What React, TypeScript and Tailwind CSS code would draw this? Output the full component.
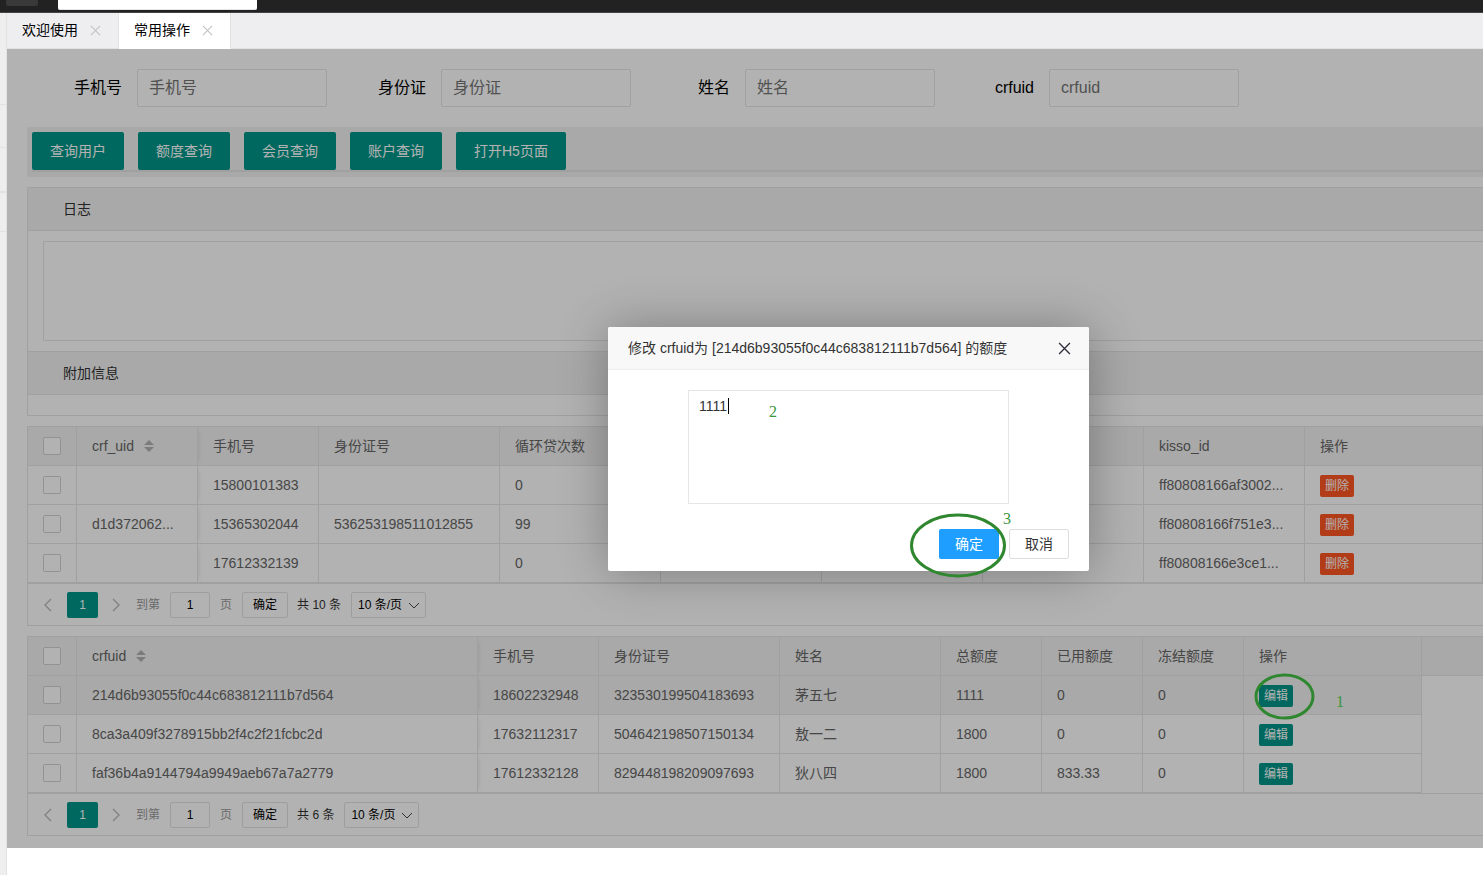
import { useState } from 'react';

const FIELDS = [
  { id: 'mobile', label: '手机号' },
  { id: 'idNo', label: '身份证' },
  { id: 'name', label: '姓名' },
  { id: 'crfuid', label: 'crfuid' },
];

const ACTIONS = ['查询用户', '额度查询', '会员查询', '账户查询', '打开H5页面'];

const USER_COLS = ['w-[121px]', 'w-[121px]', 'w-[181px]', 'w-[161px]', 'w-[161px]', 'w-[161px]', 'w-[161px]', 'w-[161px]', ''];
const USER_HEADS = ['crf_uid', '手机号', '身份证号', '循环贷次数', '', '', '', 'kisso_id'];
const USERS = [
  ['', '15800101383', '', '0', '', '', '', 'ff80808166af3002...'],
  ['d1d372062...', '15365302044', '536253198511012855', '99', '', '', '', 'ff80808166f751e3...'],
  ['', '17612332139', '', '0', '', '', '', 'ff80808166e3ce1...'],
];

const QUOTA_COLS = ['w-[401px]', 'w-[121px]', 'w-[181px]', 'w-[161px]', 'w-[101px]', 'w-[101px]', 'w-[101px]', 'w-[178px]', ''];
const QUOTA_HEADS = ['crfuid', '手机号', '身份证号', '姓名', '总额度', '已用额度', '冻结额度'];
const QUOTAS = [
  ['214d6b93055f0c44c683812111b7d564', '18602232948', '323530199504183693', '茅五七', '1111', '0', '0'],
  ['8ca3a409f3278915bb2f4c2f21fcbc2d', '17632112317', '504642198507150134', '敖一二', '1800', '0', '0'],
  ['faf36b4a9144794a9949aeb67a7a2779', '17612332128', '829448198209097693', '狄八四', '1800', '833.33', '0'],
];

const CELL = 'h-[39px] border-r border-b border-[#e6e6e6] px-[15px] text-left align-middle font-normal whitespace-nowrap';
const PINNED = 'shadow-[5px_0_4px_-4px_rgba(0,0,0,0.08)]';

function Cross({ className }: { className: string }) {
  return (
    <svg className={className} viewBox="0 0 12 12" fill="none" stroke="currentColor" strokeWidth="1.2" aria-hidden="true">
      <path d="M1 1l10 10M11 1L1 11" />
    </svg>
  );
}

function SortIcon() {
  return (
    <svg className="w-[10px] h-3 fill-[#b2b2b2]" viewBox="0 0 10 12" aria-hidden="true">
      <path d="M5 0l5 5H0zM5 12L0 7h10z" />
    </svg>
  );
}

function Check({ label }: { label: string }) {
  return (
    <input
      type="checkbox"
      aria-label={label}
      className="block w-[18px] h-[18px] appearance-none rounded-xs border border-[#d2d2d2] bg-white checked:bg-[#5fb878]"
    />
  );
}

function Tab({ title, active }: { title: string; active?: boolean }) {
  return (
    <div
      className={`flex items-center gap-3 border-r border-b border-r-[#e2e2e2] pr-[17px] pb-px pl-[15px] ${
        active ? 'border-b-white bg-white' : 'border-b-[#e2e2e2]'
      }`}
    >
      <a href="#" className="text-sm text-black">{title}</a>
      <button type="button" aria-label="关闭" className="text-[#c2c2c2]">
        <Cross className="w-[11px] h-[11px]" />
      </button>
    </div>
  );
}

function Pager({ id, total }: { id: string; total: number }) {
  return (
    <div className="flex h-[42px] items-center border-t border-[#e6e6e6] pl-[15px] text-xs text-[#333]">
      <button type="button" aria-label="上一页" className="text-[#bbb]">
        <svg className="w-[10px] h-[14px]" viewBox="0 0 10 14" fill="none" stroke="currentColor" strokeWidth="1.4">
          <path d="M8 1L2 7l6 6" />
        </svg>
      </button>
      <button type="button" className="ml-[14px] w-[31px] h-[26px] rounded-xs bg-[#009688] text-white">1</button>
      <button type="button" aria-label="下一页" className="ml-[13px] text-[#bbb]">
        <svg className="w-[10px] h-[14px]" viewBox="0 0 10 14" fill="none" stroke="currentColor" strokeWidth="1.4">
          <path d="M2 1l6 6-6 6" />
        </svg>
      </button>
      <label htmlFor={`${id}-page`} className="ml-[15px] text-[#999]">到第</label>
      <input
        id={`${id}-page`}
        defaultValue="1"
        className="mx-[10px] w-10 h-[26px] rounded-xs border border-[#e2e2e2] text-center text-black outline-none"
      />
      <span className="text-[#999]">页</span>
      <button type="button" className="ml-[10px] w-[46px] h-[26px] rounded-xs border border-[#e2e2e2] text-black">确定</button>
      <span className="ml-[9px]">共 {total} 条</span>
      <div className="relative ml-[10px]">
        <select
          aria-label="每页条数"
          className="block w-[75px] h-[26px] appearance-none rounded-xs border border-[#e2e2e2] pl-[6px] text-black outline-none"
        >
          <option>10 条/页</option>
          <option>20 条/页</option>
        </select>
        <svg className="pointer-events-none absolute top-[10px] right-[6px] w-3 h-2" viewBox="0 0 12 8" fill="none" stroke="#444">
          <path d="M1 1l5 5 5-5" />
        </svg>
      </div>
    </div>
  );
}

type GridProps = {
  id: string;
  cols: string[];
  heads: string[];
  rows: string[][];
  action: string;
  actionClass: string;
  total: number;
  filler?: boolean;
  selected?: number;
};

function Grid({ id, cols, heads, rows, action, actionClass, total, filler, selected }: GridProps) {
  return (
    <div className="mt-[10px] overflow-hidden border-y border-l border-[#e6e6e6]">
      <table className="w-full table-fixed border-separate border-spacing-0 text-sm text-[#666]">
        <colgroup>
          <col className="w-[49px]" />
          {cols.map((c, i) => (
            <col key={i} className={c} />
          ))}
        </colgroup>
        <thead>
          <tr className="bg-[#f2f2f2]">
            <th className={CELL}><Check label="全选" /></th>
            {heads.map((h, i) => (
              <th key={i} className={`${CELL} ${i === 0 ? PINNED : ''}`}>
                {i === 0 ? (
                  <button type="button" className="flex items-center gap-[10px]">
                    {h} <SortIcon />
                  </button>
                ) : h}
              </th>
            ))}
            <th className={CELL}>操作</th>
            {filler && <th className="border-b border-[#e6e6e6]" />}
          </tr>
        </thead>
        <tbody>
          {rows.map((row, r) => (
            <tr key={r} className={r === selected ? 'bg-[#f2f2f2]' : ''}>
              <td className={CELL}><Check label="选择" /></td>
              {row.map((v, i) => (
                <td key={i} className={`${CELL} ${i === 0 ? PINNED : ''}`}>{v}</td>
              ))}
              <td className={CELL}>
                <button type="button" className={`mt-[2px] block h-[22px] rounded-xs px-[5px] text-xs text-white ${actionClass}`}>
                  {action}
                </button>
              </td>
              {filler && <td className="bg-white" />}
            </tr>
          ))}
        </tbody>
      </table>
      <Pager id={id} total={total} />
    </div>
  );
}

function QuotaDialog() {
  const [amount, setAmount] = useState('1111');

  return (
    <div
      role="dialog"
      aria-labelledby="dialog-title"
      className="absolute top-[278px] left-[601px] w-[481px] rounded-xs bg-white shadow-[1px_1px_50px_rgba(0,0,0,0.3)]"
    >
      <div className="flex h-[43px] items-center justify-between rounded-t-xs border-b border-[#eee] bg-[#f8f8f8] pr-[18px] pl-5">
        <h2 id="dialog-title" className="text-sm text-[#333]">修改 crfuid为 [214d6b93055f0c44c683812111b7d564] 的额度</h2>
        <button type="button" aria-label="关闭" className="text-[#2d2c3b]">
          <Cross className="w-[13px] h-[13px]" />
        </button>
      </div>
      <div className="relative mx-20 mt-5">
        <textarea
          aria-labelledby="dialog-title"
          value={amount}
          onChange={(e) => setAmount(e.target.value)}
          className="block w-full h-[114px] resize-none border border-[#e6e6e6] px-[10px] py-[5px] text-sm text-[#333] outline-none"
        />
        <span className="absolute top-2 left-10 w-px h-4 bg-black" />
      </div>
      <div className="flex justify-end gap-[10px] px-5 pt-[25px] pb-3 text-sm">
        <button type="button" className="w-[60px] h-[30px] rounded-xs bg-[#1e9fff] text-white">确定</button>
        <button type="button" className="w-[60px] h-[30px] rounded-xs border border-[#dedede] text-[#333]">取消</button>
      </div>
    </div>
  );
}

// Numbered steps: 1 edit, 2 type the amount, 3 confirm
function Steps() {
  return (
    <svg
      className="pointer-events-none absolute inset-0 w-full h-full font-['Liberation_Serif',serif] text-base"
      fill="none"
      stroke="#2f872f"
      strokeWidth="3"
    >
      <ellipse cx="951" cy="496.5" rx="46.5" ry="30.5" />
      <ellipse cx="1277.5" cy="647.5" rx="28.5" ry="21.5" />
      <g fill="#3c963c" stroke="none">
        <text x="1329" y="658">1</text>
        <text x="762" y="368">2</text>
        <text x="996" y="475">3</text>
      </g>
    </svg>
  );
}

export default function App() {
  return (
    <div className="flex min-h-screen flex-col overflow-x-hidden bg-white font-['Liberation_Sans','Noto_Sans_CJK_SC',sans-serif]">
      <header className="flex h-[13px] items-start border-b border-[#444] bg-[#222] pl-[6px]">
        <div className="w-8 h-[6px] rounded-b-xs bg-[#393939]" />
        <div className="ml-5 w-[199px] h-[10px] rounded-b-xs border-b border-[#e6e6e6] bg-white" />
      </header>

      <div className="flex flex-1">
        <aside className="w-[7px] shrink-0 border-r border-[#e2e2e2] bg-[#eee]">
          <div className="h-[92px] border-b border-[#e2e2e2]" />
          <div className="h-[43px] border-b border-[#e2e2e2]" />
          <div className="h-[45px] border-b-2 border-[#e2e2e2]" />
          <div className="h-[39px] border-b border-[#e2e2e2]" />
        </aside>

        <div className="min-w-0 flex-1">
          <nav className="flex h-9 bg-[#eeeef0]">
            <Tab title="欢迎使用" />
            <Tab title="常用操作" active />
            <div className="flex-1 border-b border-[#e2e2e2]" />
          </nav>

          <main className="relative pt-5 pb-3 pl-5">
            <form className="flex gap-1">
              {FIELDS.map((f) => (
                <div key={f.id} className="flex shrink-0 items-center">
                  <label htmlFor={f.id} className="w-[110px] pr-[15px] text-right text-base text-black">{f.label}</label>
                  <input
                    id={f.id}
                    placeholder={f.label}
                    className="w-[190px] h-[38px] rounded-xs border border-[#e6e6e6] px-[11px] text-base outline-none placeholder:text-[#757575]"
                  />
                </div>
              ))}
            </form>

            <div className="mt-5 bg-[#f2f2f2] py-[5px] pl-[5px]">
              <div className="flex gap-[14px] border-b-2 border-[#e6e6e6]">
                {ACTIONS.map((a) => (
                  <button key={a} type="button" className="h-[38px] rounded-xs bg-[#009688] px-[18px] text-sm whitespace-nowrap text-white">
                    {a}
                  </button>
                ))}
              </div>
            </div>

            <div className="mt-[10px] rounded-l-xs border-y border-l border-[#e6e6e6] text-sm text-[#333]">
              <h2 className="h-[42px] bg-[#f2f2f2] pl-[35px] leading-[42px]">日志</h2>
              <div className="border-t border-[#e6e6e6] py-[10px] pl-[15px]">
                <textarea aria-label="日志" className="block w-full h-[100px] resize-none rounded-l-xs border-y border-l border-[#e6e6e6] outline-none" />
              </div>
              <h2 className="h-[43px] border-t border-[#e6e6e6] bg-[#f2f2f2] pl-[35px] leading-[42px]">附加信息</h2>
              <div className="h-[21px] border-t border-[#e6e6e6]" />
            </div>

            <Grid
              id="users"
              cols={USER_COLS}
              heads={USER_HEADS}
              rows={USERS}
              action="删除"
              actionClass="bg-[#ff5722]"
              total={10}
            />
            <Grid
              id="quotas"
              cols={QUOTA_COLS}
              heads={QUOTA_HEADS}
              rows={QUOTAS}
              action="编辑"
              actionClass="bg-[#009688]"
              total={6}
              filler
              selected={0}
            />

            <div className="absolute inset-0 bg-black/30" />
            <QuotaDialog />
            <Steps />
          </main>
        </div>
      </div>
    </div>
  );
}
